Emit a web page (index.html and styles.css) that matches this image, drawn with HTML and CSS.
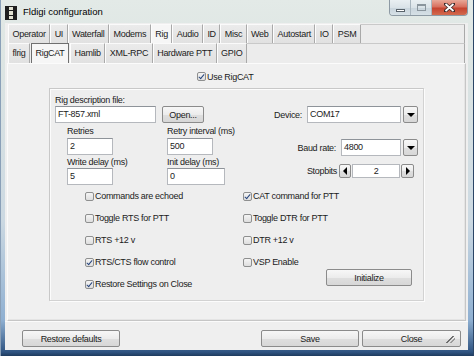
FILE: index.html
```html
<!DOCTYPE html>
<html lang="en">
<head>
    <meta charset="UTF-8">
    <title>Fldigi configuration</title>
    <link rel="stylesheet" href="styles.css">
</head>
<body>
<div id="window">
    <div id="titlebar">
        <svg class="app-icon" width="12" height="14" viewBox="0 0 12 14">
            <rect x="0" y="0" width="12" height="14" fill="#1e1e1e"/>
            <rect x="4" y="1" width="4" height="12" fill="#e2e2d2"/>
            <rect x="4" y="4" width="4" height="1" fill="#1e1e1e"/>
            <rect x="4" y="9" width="4" height="1" fill="#1e1e1e"/>
        </svg>
        <span class="title">Fldigi configuration</span>
        <div class="caption">
            <div class="cap cap-min"><span class="glyph-min"></span></div>
            <div class="cap cap-max"><span class="glyph-max"></span></div>
            <div class="cap cap-close">
                <svg width="11" height="9" viewBox="0 0 11 9">
                    <path d="M1.5 1 L9.5 8 M9.5 1 L1.5 8" stroke="#3b2a2a" stroke-width="3.4" stroke-linecap="square"/>
                    <path d="M1.5 1 L9.5 8 M9.5 1 L1.5 8" stroke="#ffffff" stroke-width="1.8"/>
                </svg>
            </div>
        </div>
    </div>

    <div id="client">
        <div class="tabs tabs-top">
            <span class="tab">Operator</span>
            <span class="tab">UI</span>
            <span class="tab">Waterfall</span>
            <span class="tab">Modems</span>
            <span class="tab active">Rig</span>
            <span class="tab">Audio</span>
            <span class="tab">ID</span>
            <span class="tab">Misc</span>
            <span class="tab">Web</span>
            <span class="tab">Autostart</span>
            <span class="tab">IO</span>
            <span class="tab">PSM</span>
            <span class="tab-fill"></span>
        </div>
        <div class="tabs tabs-sub">
            <span class="tab">flrig</span>
            <span class="tab active">RigCAT</span>
            <span class="tab">Hamlib</span>
            <span class="tab">XML-RPC</span>
            <span class="tab">Hardware PTT</span>
            <span class="tab">GPIO</span>
            <span class="tab-fill"></span>
        </div>

        <div id="panel">
            <div class="use-row">
                <span class="check on"></span><span>Use RigCAT</span>
            </div>

            <div id="group">
                <div class="row row-file">
                    <div class="field">
                        <div class="lbl">Rig description file:</div>
                        <div class="line">
                            <div class="input w-file">FT-857.xml</div>
                            <div class="btn btn-open">Open...</div>
                        </div>
                    </div>
                    <div class="combo">
                        <span class="side-lbl">Device:</span>
                        <div class="input w-dev">COM17</div>
                        <div class="drop"></div>
                    </div>
                </div>

                <div class="row row-retry">
                    <div class="pair">
                        <div class="field">
                            <div class="lbl">Retries</div>
                            <div class="input w-num">2</div>
                        </div>
                        <div class="field">
                            <div class="lbl">Retry interval (ms)</div>
                            <div class="input w-num">500</div>
                        </div>
                    </div>
                    <div class="combo">
                        <span class="side-lbl">Baud rate:</span>
                        <div class="input w-baud">4800</div>
                        <div class="drop"></div>
                    </div>
                </div>

                <div class="row row-delay">
                    <div class="pair">
                        <div class="field">
                            <div class="lbl">Write delay (ms)</div>
                            <div class="input w-num">5</div>
                        </div>
                        <div class="field">
                            <div class="lbl">Init delay (ms)</div>
                            <div class="input w-init">0</div>
                        </div>
                    </div>
                    <div class="spinner">
                        <span class="side-lbl">Stopbits</span>
                        <div class="arrow arrow-left"></div>
                        <div class="spin-val">2</div>
                        <div class="arrow arrow-right"></div>
                    </div>
                </div>

                <div class="checks">
                    <div class="opt"><span class="check"></span>Commands are echoed</div>
                    <div class="opt"><span class="check on"></span>CAT command for PTT</div>
                    <div class="opt"><span class="check"></span>Toggle RTS for PTT</div>
                    <div class="opt"><span class="check"></span>Toggle DTR for PTT</div>
                    <div class="opt"><span class="check"></span>RTS +12 v</div>
                    <div class="opt"><span class="check"></span>DTR +12 v</div>
                    <div class="opt"><span class="check on"></span>RTS/CTS flow control</div>
                    <div class="opt"><span class="check"></span>VSP Enable</div>
                    <div class="opt"><span class="check on"></span>Restore Settings on Close</div>
                    <div class="btn btn-init">Initialize</div>
                </div>
            </div>
        </div>

        <div id="footer">
            <div class="btn btn-foot">Restore defaults</div>
            <div class="spacer"></div>
            <div class="btn btn-foot">Save</div>
            <div class="btn btn-foot btn-close">Close<span class="grip"></span></div>
        </div>
    </div>
</div>
</body>
</html>
```

FILE: styles.css
```css
* {
    box-sizing: border-box;
}
html, body {
    margin: 0;
    padding: 0;
}
body {
    width: 474px;
    height: 356px;
    overflow: hidden;
    font-family: "Liberation Sans", Arial, sans-serif;
    font-size: 9px;
    letter-spacing: -0.3px;
    color: #1b1b1b;
    background: linear-gradient(to bottom, #e3eae7 0, #dde5e3 60px, #ccd9e2 220px, #8fb0d2 320px, #2f5482 352px, #1e3b5e 356px);
}
#window {
    width: 474px;
    height: 356px;
    display: flex;
    flex-direction: column;
    border-left: 1px solid #8aa0b8;
    border-right: 1px solid #2b4566;
}

/* title bar */
#titlebar {
    height: 23px;
    display: flex;
    align-items: flex-start;
}
.app-icon {
    margin: 6px 0 0 4px;
}
.title {
    margin: 6px 0 0 6px;
    font-size: 9.5px;
    letter-spacing: 0;
    line-height: 12px;
    color: #000;
}
.caption {
    margin-left: auto;
    margin-right: 5px;
    display: flex;
    height: 16px;
    border: 1px solid #8d9aa4;
    border-top: none;
    border-radius: 0 0 4px 4px;
    overflow: hidden;
}
.cap {
    height: 15px;
    display: flex;
    align-items: center;
    justify-content: center;
}
.cap-min, .cap-max {
    width: 21px;
    background: linear-gradient(to bottom, #e9eff2 0, #dae3e8 50%, #c8d4dc 51%, #d6e0e6 100%);
    border-right: 1px solid #a9b6bf;
}
.glyph-min {
    width: 9px;
    height: 3px;
    margin-top: 5px;
    background: #fff;
    border: 1px solid #59636b;
}
.glyph-max {
    width: 9px;
    height: 7px;
    border: 1px solid #8a959d;
    border-top-width: 2px;
    background: transparent;
}
.cap-close {
    width: 35px;
    background: linear-gradient(to bottom, #e8a898 0, #d8705e 45%, #c64430 55%, #d26a4e 100%);
}

/* client area */
#client {
    margin: 0 5px 0 4px;
    height: 327px;
    background: #efefef;
    display: flex;
    flex-direction: column;
}
.tabs {
    display: flex;
    padding-left: 3px;
    padding-right: 3px;
}
.tabs-top {
    height: 19px;
    margin-top: 1px;
}
.tabs-sub {
    height: 20px;
}
.tab {
    padding: 0 3.5px;
    line-height: 18px;
    white-space: nowrap;
    background: linear-gradient(to bottom, #ebebeb, #e1e1e1);
    border-top: 1px solid #fafafa;
    border-left: 1px solid #fdfdfd;
    border-right: 1px solid #a9a9a9;
}
.tab.active {
    background: #f6f6f6;
}
.tabs-sub .tab {
    line-height: 19px;
}
.tabs-sub .tab.active {
    border: 1px solid #6f6f6f;
    border-bottom: none;
    line-height: 18px;
    margin: 0 1px;
}
.tab-fill {
    flex: 1;
    border-top: 1px solid #c9c9c9;
    border-right: 1px solid #a9a9a9;
    background: #ececec;
}

#panel {
    margin: 0 2px 0 2px;
    height: 258px;
    border: 1px solid #c6c6c6;
    border-top-color: #fbfbfb;
    border-left-color: #fbfbfb;
    background: #f0f0f0;
    box-shadow: inset -1px -1px 0 #e4e4e4;
}
.use-row {
    display: flex;
    align-items: center;
    height: 13px;
    margin-top: 6px;
    padding-left: 189px;
}

#group {
    margin: 5px 0 0 41px;
    width: 375px;
    height: 213px;
    border: 1px solid #d2d2d2;
    border-top-color: #c8c8c8;
    border-left-color: #c8c8c8;
    box-shadow: inset 1px 1px 0 #fcfcfc, 1px 1px 0 #fcfcfc;
    background: #eeeeee;
    display: flex;
    flex-direction: column;
}
.row {
    display: flex;
    justify-content: space-between;
    padding-right: 5px;
}
.row-file {
    margin-top: 5px;
    height: 29px;
    padding-left: 5px;
}
.row-retry {
    margin-top: 2px;
    height: 31px;
    padding-left: 17px;
}
.row-delay {
    height: 29px;
    padding-left: 17px;
}
.field .lbl {
    line-height: 12px;
    height: 12px;
    white-space: nowrap;
}
.row-retry .field .input {
    margin-top: 1px;
}
.line {
    display: flex;
}
.pair {
    display: grid;
    grid-template-columns: 100px auto;
}
.input {
    height: 17px;
    background: #fff;
    border: 1px solid #b5b8bd;
    border-top-color: #8e9399;
    padding-left: 2px;
    line-height: 15px;
    white-space: nowrap;
}
.w-file { width: 101px; }
.w-dev { width: 94px; }
.w-baud { width: 60px; }
.w-num { width: 46px; }
.w-init { width: 58px; }

.combo, .spinner {
    display: flex;
    align-items: center;
    align-self: flex-end;
}
.spinner {
    align-self: center;
    margin-right: 4px;
    height: 14px;
}
.side-lbl {
    margin-right: 5px;
    white-space: nowrap;
}
.spinner .side-lbl {
    margin-right: 2px;
}

.btn {
    height: 17px;
    border: 1px solid #8b8b8b;
    border-radius: 2px;
    background: linear-gradient(to bottom, #f7f7f7 0, #ececec 50%, #dfdfdf 51%, #d7d7d7 100%);
    display: flex;
    align-items: center;
    justify-content: center;
    white-space: nowrap;
}
.btn-open {
    width: 42px;
    margin-left: 6px;
}
.drop {
    width: 15px;
    height: 17px;
    margin-left: 2px;
    border: 1px solid #8b8b8b;
    border-radius: 2px;
    background: linear-gradient(to bottom, #f7f7f7 0, #ececec 50%, #dfdfdf 51%, #d7d7d7 100%);
    display: flex;
    align-items: center;
    justify-content: center;
}
.drop::after {
    content: "";
    border-left: 4px solid transparent;
    border-right: 4px solid transparent;
    border-top: 4px solid #000;
    margin-top: 1px;
}
.arrow {
    height: 14px;
    border: 1px solid #8b8b8b;
    border-radius: 2px;
    background: linear-gradient(to bottom, #f7f7f7 0, #ececec 50%, #dfdfdf 51%, #d7d7d7 100%);
    display: flex;
    align-items: center;
    justify-content: center;
}
.arrow-left {
    width: 12px;
}
.arrow-right {
    width: 13px;
}
.arrow-left::after {
    content: "";
    border-top: 4px solid transparent;
    border-bottom: 4px solid transparent;
    border-right: 4px solid #000;
}
.arrow-right::after {
    content: "";
    border-top: 4px solid transparent;
    border-bottom: 4px solid transparent;
    border-left: 4px solid #000;
}
.spin-val {
    width: 48px;
    height: 14px;
    margin: 0 1px;
    background: #fff;
    border: 1px solid #b5b8bd;
    text-align: center;
    line-height: 12px;
}

/* check boxes */
.check {
    width: 9px;
    height: 9px;
    margin-right: 1px;
    border: 1px solid #8e8f8f;
    border-radius: 2px;
    background: linear-gradient(to bottom, #f4f4f4, #dedede);
    position: relative;
    flex: none;
}
.check.on::after {
    content: "";
    position: absolute;
    left: 2px;
    top: 0;
    width: 2px;
    height: 5px;
    border-right: 1.5px solid #27467e;
    border-bottom: 1.5px solid #27467e;
    transform: rotate(40deg);
}
.checks {
    display: grid;
    grid-template-columns: 158px auto;
    grid-auto-rows: 22px;
    padding-left: 35px;
}
.opt {
    display: flex;
    align-items: center;
    white-space: nowrap;
}
.btn-init {
    grid-column: 2;
    width: 86px;
    margin: -4px 0 0 83px;
}

/* footer */
#footer {
    flex: 1;
    display: flex;
    align-items: flex-start;
    padding: 8px 7px 0 17px;
    border-top: 1px solid #fbfbfb;
}
.spacer {
    flex: 1;
}
.btn-foot {
    width: 98px;
}
.btn-foot + .btn-foot {
    margin-left: 3px;
}
.btn-close {
    position: relative;
    width: 99px;
}
.grip {
    position: absolute;
    right: 5px;
    bottom: 3px;
    width: 9px;
    height: 7px;
    background: linear-gradient(135deg, transparent 40%, #6e6e6e 40%, #6e6e6e 52%, transparent 52%, transparent 64%, #9a9a9a 64%, #9a9a9a 76%, transparent 76%);
}
```
